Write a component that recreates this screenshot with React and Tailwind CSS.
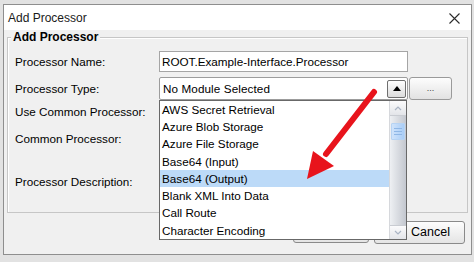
import React from "react";

const items = [
  "AWS Secret Retrieval",
  "Azure Blob Storage",
  "Azure File Storage",
  "Base64 (Input)",
  "Base64 (Output)",
  "Blank XML Into Data",
  "Call Route",
  "Character Encoding",
];

const Label = ({ children }) => (
  <div className="w-[144px] shrink-0 flex items-center">{children}</div>
);

const ScrollBar = () => (
  <div className="w-[17px] h-full flex flex-col bg-gradient-to-r from-[#eef0f3] to-[#c3c7cf] border-l border-[#d6d8dc]">
    <div className="h-[15px] flex items-center justify-center bg-gradient-to-b from-[#fbfbfc] to-[#e3e5e9] border-b border-[#c9ccd2]">
      <svg width="8" height="5" viewBox="0 0 8 5">
        <path d="M1 4 L4 1 L7 4" fill="none" stroke="#a9b4c4" strokeWidth="1.2" />
      </svg>
    </div>
    <div className="h-[7px]" />
    <div className="h-[17px] mx-[1px] bg-gradient-to-r from-[#cfe3fb] to-[#a9cdf6] border border-[#b6d3f3] rounded-[1px] flex flex-col items-center justify-center gap-[2px]">
      <div className="w-[8px] h-px bg-[#8fb7e6]" />
      <div className="w-[8px] h-px bg-[#8fb7e6]" />
      <div className="w-[8px] h-px bg-[#8fb7e6]" />
    </div>
    <div className="flex-1" />
    <div className="h-[14px] flex items-center justify-center bg-gradient-to-b from-[#fbfbfc] to-[#e3e5e9] border-t border-[#c9ccd2]">
      <svg width="8" height="5" viewBox="0 0 8 5">
        <path d="M1 1 L4 4 L7 1" fill="none" stroke="#a9b4c4" strokeWidth="1.2" />
      </svg>
    </div>
  </div>
);

export default function App() {
  return (
    <div className="relative w-[474px] h-[262px] overflow-hidden bg-[#e2e2e2] pt-[4px] pl-[3px] font-['Liberation_Sans',Arial,sans-serif] text-[11.7px] text-black">
      <div className="w-[469px] h-[251px] border border-[#8e8e8e] bg-[#f0f0f0] flex flex-col">
        {/* title bar */}
        <div className="h-[25px] shrink-0 bg-white flex items-center justify-between pl-[4px] pr-[11px]">
          <span className="text-[12px] text-[#1a1a1a] pt-[1px]">Add Processor</span>
          <svg width="11" height="11" viewBox="0 0 11 11" className="mt-[1px]">
            <path d="M0.5 0.5 L10.5 10.5 M10.5 0.5 L0.5 10.5" stroke="#2b2b2b" strokeWidth="1.1" />
          </svg>
        </div>

        {/* body */}
        <div className="pt-[7px] pl-[3px] pr-[2px] flex flex-col">
          <div className="relative w-[461px] h-[176px] border border-[#c6c6c6] shadow-[inset_1px_1px_0_#ffffff]">
            <span className="absolute left-[3px] top-[-8px] px-[2px] bg-[#f0f0f0] font-bold text-[12px] leading-[14px]">
              Add Processor
            </span>
            <div className="pt-[13px] pl-[7px] flex flex-col">
              <div className="h-[21px] flex">
                <Label>Processor Name:</Label>
                <div className="w-[249px] h-[21px] bg-white border border-[#a5a5a5] flex items-center pl-[2px]">
                  ROOT.Example-Interface.Processor
                </div>
              </div>
              <div className="h-[23px] mt-[5px] flex">
                <Label>Processor Type:</Label>
                <div className="w-[249px] h-[23px] bg-white border border-[#9c9c9c] rounded-[2px] flex items-center justify-between pl-[3px] pr-[1px]">
                  <span className="tracking-[0.1px]">No Module Selected</span>
                  <div className="w-[19px] h-[18px] border border-[#6f6f6f] rounded-[2px] bg-gradient-to-b from-white to-[#dcdcdc] flex items-center justify-center">
                    <svg width="8" height="5" viewBox="0 0 8 5">
                      <path d="M0 5 L4 0 L8 5 Z" fill="#000" />
                    </svg>
                  </div>
                </div>
                <div className="w-[43px] h-[23px] ml-[1px] border border-[#9a9a9a] rounded-[3px] bg-gradient-to-b from-[#fdfdfd] to-[#e2e2e2] flex items-center justify-center text-[9px] text-[#444]">
                  ...
                </div>
              </div>
              <div className="h-[22px] mt-[1px] flex">
                <Label>Use Common Processor:</Label>
              </div>
              <div className="h-[22px] mt-[5px] flex">
                <Label>Common Processor:</Label>
              </div>
              <div className="h-[48px] mt-[8px] flex">
                <Label>Processor Description:</Label>
              </div>
            </div>
          </div>

          {/* buttons */}
          <div className="mt-[8px] flex justify-end gap-[5px] pr-[4px]">
            <div className="w-[76px] h-[22px] border border-[#8a8a8a] rounded-[3px] bg-gradient-to-b from-[#fdfdfd] to-[#e4e4e4] flex items-center justify-center">
              OK
            </div>
            <div className="w-[91px] h-[23px] border border-[#8a8a8a] rounded-[3px] bg-gradient-to-b from-[#fdfdfd] to-[#e4e4e4] flex items-center pl-[36px] text-[12.5px]">
              Cancel
            </div>
          </div>
        </div>
      </div>

      {/* dropdown popup */}
      <div className="absolute left-[159px] top-[100px] w-[248px] h-[140px] bg-white border border-[#686868] flex">
        <div className="flex-1 flex flex-col">
          {items.map((it, i) => (
            <div
              key={it}
              className={
                i === 4
                  ? "h-[17.25px] flex items-center pl-[2px] bg-[#bcdaf8]"
                  : "h-[17.25px] flex items-center pl-[2px]"
              }
            >
              {it}
            </div>
          ))}
        </div>
        <ScrollBar />
      </div>

      {/* red arrow */}
      <svg className="absolute left-0 top-0" width="474" height="262" viewBox="0 0 474 262">
        <line x1="374" y1="92" x2="326" y2="154" stroke="#e8141c" strokeWidth="6" strokeLinecap="round" />
        <path d="M307 179 L313 151 L334 166 Z" fill="#e8141c" />
      </svg>
    </div>
  );
}
